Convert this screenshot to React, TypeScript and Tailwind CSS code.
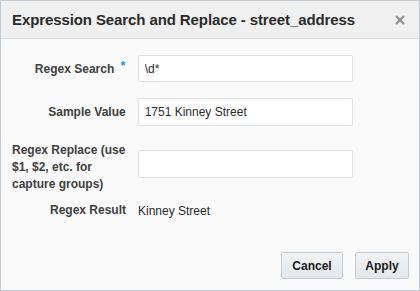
import { X } from "lucide-react";

export default function App() {
  return (
    <div className="w-[420px] h-[291px] border border-[#c2cbd4] bg-[#fafafa] flex flex-col font-['Liberation_Sans',Arial,sans-serif]">
      <div className="h-[38px] shrink-0 bg-[#f0f0f0] border-b border-[#d6dce2] flex items-center justify-between pl-[11px] pr-[12px]">
        <h1 className="text-[15px] font-bold text-[#2b2b2b] leading-none tracking-[-0.1px]">
          Expression Search and Replace - street_address
        </h1>
        <X className="w-[14px] h-[14px] text-[#8a8f94]" strokeWidth={3.5} />
      </div>
      <div className="flex-1 flex flex-col pt-[16px] pl-[11px] pr-[66px]">
        <div className="flex items-center h-[27px]">
          <label className="w-[114px] text-right text-[12px] font-bold text-[#404040]">
            Regex Search <span className="text-[#3e8ed0] ml-[3px] relative -top-[3px] text-[13px]">*</span>
          </label>
          <input
            readOnly
            value="\d*"
            className="ml-[12px] w-[216px] h-[27px] bg-white border border-[#dfe3e8] rounded-[2px] px-[6px] text-[12px] text-[#2b2b2b] outline-none"
          />
        </div>
        <div className="flex items-center h-[28px] mt-[16px]">
          <label className="w-[114px] text-right text-[12px] font-bold text-[#404040]">Sample Value</label>
          <input
            readOnly
            value="1751 Kinney Street"
            className="ml-[12px] w-[216px] h-[28px] bg-white border border-[#dfe3e8] rounded-[2px] px-[6px] text-[12px] text-[#2b2b2b] outline-none"
          />
        </div>
        <div className="flex items-start mt-[16px]">
          <label className="w-[114px] text-left text-[12px] leading-[17px] font-bold text-[#404040]">
            Regex Replace (use $1, $2, etc. for capture groups)
          </label>
          <input
            readOnly
            value=""
            className="ml-[12px] mt-[8px] w-[216px] h-[28px] bg-white border border-[#dfe3e8] rounded-[2px] px-[6px] text-[12px] text-[#2b2b2b] outline-none"
          />
        </div>
        <div className="flex items-center mt-[8px] h-[17px]">
          <label className="w-[114px] text-right text-[12px] font-bold text-[#404040]">Regex Result</label>
          <span className="ml-[12px] text-[12px] text-[#2b2b2b] mt-[2px]">Kinney Street</span>
        </div>
      </div>
      <div className="flex justify-end gap-[12px] pr-[10px] pb-[11px]">
        <button className="w-[62px] h-[27px] border border-[#c3ccd4] rounded-[2px] bg-gradient-to-b from-[#f1f3f5] to-[#e4e8ec] text-[12px] font-bold text-[#1a1a1a]">
          Cancel
        </button>
        <button className="w-[54px] h-[27px] border border-[#c3ccd4] rounded-[2px] bg-gradient-to-b from-[#f1f3f5] to-[#e4e8ec] text-[12px] font-bold text-[#1a1a1a]">
          Apply
        </button>
      </div>
    </div>
  );
}
